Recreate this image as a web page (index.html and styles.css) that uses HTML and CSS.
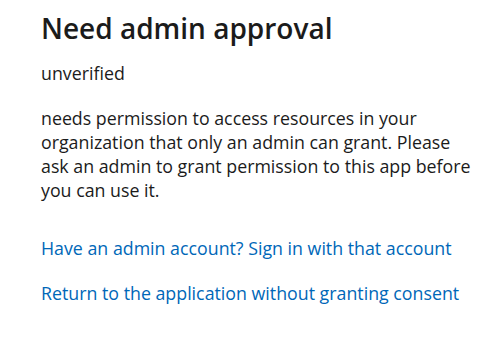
FILE: index.html
```html
<!DOCTYPE html>
<html>
<head>
    <title>Need admin approval</title>
    <link rel="stylesheet" href="styles.css">
</head>
<body>
    <div class="content">
        <h1 class="title">Need admin approval</h1>
        <div class="app-name">unverified</div>
        <p class="message">needs permission to access resources in your organization that only an admin can grant. Please ask an admin to grant permission to this app before you can use it.</p>
        <div class="links">
            <a class="link" href="#">Have an admin account? Sign in with that account</a>
            <a class="link" href="#">Return to the application without granting consent</a>
        </div>
    </div>
</body>
</html>
```

FILE: styles.css
```css
body {
    margin: 0;
    background: #fff;
    font-family: "Open Sans", "Noto Sans", sans-serif;
    color: #1b1b1b;
}
.content {
    padding: 8px 26px 0 41px;
}
.title {
    font-size: 28px;
    font-weight: 600;
    line-height: 40px;
    margin: 0 0 13px;
}
.app-name {
    font-size: 17.8px;
    line-height: 24px;
    margin-bottom: 21px;
}
.message {
    font-size: 17.8px;
    line-height: 24px;
    margin: 0 0 34px;
}
.links {
    display: flex;
    flex-direction: column;
    gap: 21px;
}
.link {
    color: #0067b8;
    text-decoration: none;
    font-size: 17.8px;
    line-height: 24px;
}
```
